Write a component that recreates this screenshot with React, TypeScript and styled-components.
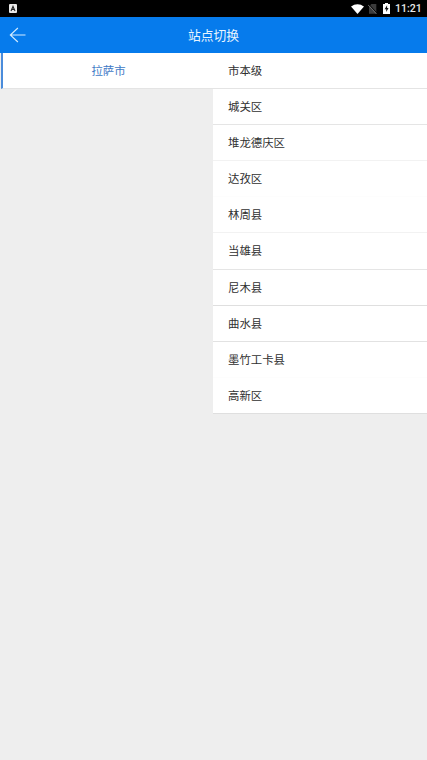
import React from "react";
import styled, { createGlobalStyle } from "styled-components";

const GlobalStyle = createGlobalStyle`
  * { box-sizing: border-box; }
  body {
    margin: 0;
    background: #eeeeee;
    font-family: "Noto Sans CJK SC", sans-serif;
  }
`;

const Screen = styled.div`
  display: flex;
  flex-direction: column;
  height: 760px;
  overflow: hidden;
  background: #eeeeee;
`;

const StatusBar = styled.div`
  flex: none;
  display: flex;
  align-items: center;
  height: 17px;
  padding: 0 6px 0 9px;
  background: #000;
  color: #fff;
`;

const StatusIcons = styled.div`
  display: flex;
  align-items: center;
  margin-left: auto;
`;

const Clock = styled.span`
  width: 26px;
  margin-left: 5px;
  font: 500 10.6px/17px Roboto, sans-serif;
  white-space: nowrap;
  color: #e8e8e8;
`;

const Header = styled.header`
  flex: none;
  display: grid;
  grid-template-columns: 40px 1fr 40px;
  align-items: center;
  height: 36px;
  background: #067bec;
  color: #e9f5ff;
`;

const BackButton = styled.button`
  display: flex;
  align-items: center;
  height: 36px;
  padding: 0 0 1px 9px;
  border: 0;
  background: none;
  color: #d4ecff;
`;

const Title = styled.h1`
  margin: 0;
  font-size: 12.8px;
  line-height: 36px;
  font-weight: 400;
  text-align: center;
`;

const Columns = styled.main`
  display: grid;
  grid-template-columns: 213px 1fr;
  align-items: start;
`;

const City = styled.div`
  height: 36px;
  margin-left: 1px;
  padding-left: 1px;
  border-left: 2px solid #4a8cdb;
  border-bottom: 1px solid #e4e4e4;
  background: #fff;
  color: #3f7ac6;
  font-size: 11.4px;
  line-height: 34px;
  text-align: center;
`;

const DistrictList = styled.ul`
  margin: 0;
  padding: 0;
  list-style: none;
`;

const District = styled.li<{ $line: string }>`
  height: 36.1px;
  padding-left: 15px;
  background: #fff;
  border-bottom: 1px solid ${(p) => p.$line};
  color: #303030;
  font-size: 11.4px;
  line-height: 34px;
`;

const districts = [
  { name: "市本级", line: "#e4e4e4" },
  { name: "城关区", line: "#e5e5e5" },
  { name: "堆龙德庆区", line: "#f2f2f2" },
  { name: "达孜区", line: "#fdfdfd" },
  { name: "林周县", line: "#f2f2f2" },
  { name: "当雄县", line: "#e5e5e5" },
  { name: "尼木县", line: "#dfdfdf" },
  { name: "曲水县", line: "#e2e2e2" },
  { name: "墨竹工卡县", line: "#fdfdfd" },
  { name: "高新区", line: "#dfdfdf" },
];

const InputMethodIcon = () => (
  <svg width="8" height="9" viewBox="0 0 8 9">
    <rect width="8" height="9" rx="1" fill="#e8e8e8" />
    <path d="M2 7 4 2.3 6 7M2.8 5.4h2.4" fill="none" stroke="#222" strokeWidth="1.1" />
  </svg>
);

const WifiIcon = () => (
  <svg width="13" height="10" viewBox="0 0 13 10">
    <path d="M0 2.6C3.7-.7 9.3-.7 13 2.6L6.5 10Z" fill="#fff" />
  </svg>
);

const NoSimIcon = () => (
  <svg width="9" height="10" viewBox="0 0 9 10">
    <path d="M3.4 0H8.3v9.8H1V2.6Z" fill="#3c3c3c" />
    <path d="m.8.2 8.2 9" stroke="#000" strokeWidth=".9" />
    <path d="m0 .8 8.4 9" stroke="#777" strokeWidth=".9" />
  </svg>
);

const BatteryIcon = () => (
  <svg width="7" height="11" viewBox="0 0 7 11">
    <path d="M2 0h3v1h2v10H0V1h2Z" fill="#fff" />
    <path d="M4.1 2.3 1.6 6.2h1.6v2.9l2.4-4H4.1Z" fill="#111" />
  </svg>
);

const IconSlot = styled.span<{ $gap: number }>`
  display: flex;
  margin-left: ${(p) => p.$gap}px;
`;

const BackArrow = () => (
  <svg width="17" height="16" viewBox="0 0 17 16" fill="none" stroke="currentColor" strokeWidth="1.1">
    <path d="M16.5 8H1.3M8.9 1 1.3 8l7.6 7" />
  </svg>
);

export default function App() {
  return (
    <Screen>
      <GlobalStyle />
      <StatusBar>
        <InputMethodIcon />
        <StatusIcons>
          <WifiIcon />
          <IconSlot $gap={4}><NoSimIcon /></IconSlot>
          <IconSlot $gap={6}><BatteryIcon /></IconSlot>
          <Clock>11:21</Clock>
        </StatusIcons>
      </StatusBar>
      <Header>
        <BackButton aria-label="返回"><BackArrow /></BackButton>
        <Title>站点切换</Title>
      </Header>
      <Columns>
        <City>拉萨市</City>
        <DistrictList>
          {districts.map((d) => (
            <District key={d.name} $line={d.line}>{d.name}</District>
          ))}
        </DistrictList>
      </Columns>
    </Screen>
  );
}
